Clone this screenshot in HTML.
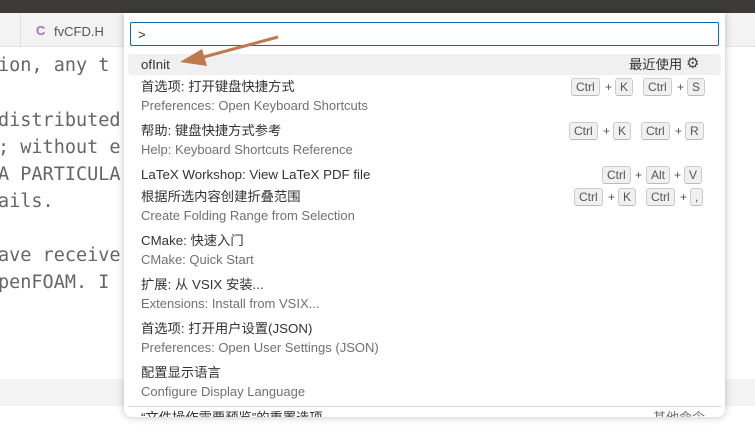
<!DOCTYPE html><html><head><meta charset="utf-8"><style>
*{margin:0;padding:0;box-sizing:border-box}
body{width:755px;height:432px;overflow:hidden;background:#fff;position:relative;font-family:"Liberation Sans","Noto Sans CJK SC",sans-serif;font-size:13px;color:#333}
.a{position:absolute;white-space:nowrap;line-height:17px}
.code{font-family:"DejaVu Sans Mono","Liberation Mono",monospace;font-size:18.5px;color:#666;left:-2px;line-height:22px}
.w{position:absolute;left:124px;top:13px;width:601px;height:404px;background:#fff;border-radius:0 0 8px 8px;box-shadow:0 0 8px rgba(0,0,0,.25);overflow:hidden}
.t{color:#333;font-size:13.3px}
.d{color:#717171;font-size:13px}
.k{position:absolute;top:0;height:18px;line-height:17px;font-size:12px;color:#555;background:#f0f0f0;border:1px solid #ccc;border-bottom-color:#bbb;border-radius:3px;padding:0 4px}
.p{position:absolute;font-size:12px;color:#555;top:1px;line-height:17px}
</style></head><body>
<div class="a" style="left:0;top:0;width:755px;height:13px;background:#3c3b37"></div>
<div class="a" style="left:0;top:13px;width:755px;height:34px;background:#f3f3f3;border-bottom:1px solid #e4e4e4"></div>
<div class="a" style="left:20px;top:13px;width:1px;height:34px;background:#e0e0e0"></div>
<div class="a" style="left:36px;top:22px;font-weight:bold;color:#a074c4;font-size:13px">C</div>
<div class="a" style="left:54px;top:23px;color:#555;font-size:13px">fvCFD.H</div>
<div class="a code" style="top:55px">ion, any t</div>
<div class="a code" style="top:110px">distributed</div>
<div class="a code" style="top:137px">; without e</div>
<div class="a code" style="top:164px">A PARTICULA</div>
<div class="a code" style="top:191px">ails.</div>
<div class="a code" style="top:245px">ave receive</div>
<div class="a code" style="top:272px">penFOAM.  I</div>
<div class="a" style="left:0;top:379px;width:755px;height:27px;background:#f3f3f3"></div>
<div class="w">
<div class="a" style="left:6px;top:9px;width:589px;height:24px;border:1px solid #0069be;border-radius:2px;padding:3px 7px;font-size:13px">&gt;</div>
<div class="a" style="left:4px;top:41px;width:593px;height:21px;background:#eef0f2;border-radius:3px"></div>
<div class="a t" style="left:17px;top:43px">ofInit</div>
<div class="a t" style="left:505px;top:43px">最近使用</div>
<div class="a" style="left:562px;top:42px;font-size:15px;color:#444">⚙</div>
<div class="a t" style="left:17px;top:65px">首选项: 打开键盘快捷方式</div>
<div class="a d" style="left:17px;top:84px">Preferences: Open Keyboard Shortcuts</div>
<div class="a t" style="left:17px;top:109px">帮助: 键盘快捷方式参考</div>
<div class="a d" style="left:17px;top:128px">Help: Keyboard Shortcuts Reference</div>
<div class="a t" style="left:17px;top:153px">LaTeX Workshop: View LaTeX PDF file</div>
<div class="a t" style="left:17px;top:175px">根据所选内容创建折叠范围</div>
<div class="a d" style="left:17px;top:194px">Create Folding Range from Selection</div>
<div class="a t" style="left:17px;top:219px">CMake: 快速入门</div>
<div class="a d" style="left:17px;top:238px">CMake: Quick Start</div>
<div class="a t" style="left:17px;top:263px">扩展: 从 VSIX 安装...</div>
<div class="a d" style="left:17px;top:282px">Extensions: Install from VSIX...</div>
<div class="a t" style="left:17px;top:307px">首选项: 打开用户设置(JSON)</div>
<div class="a d" style="left:17px;top:326px">Preferences: Open User Settings (JSON)</div>
<div class="a t" style="left:17px;top:351px">配置显示语言</div>
<div class="a d" style="left:17px;top:370px">Configure Display Language</div>
<div class="a" style="left:4px;top:393px;width:593px;height:1px;background:#d8d8d8"></div>
<div class="a t" style="left:17px;top:396px">“文件操作需要预览”的重置选项</div>
<div class="a d" style="left:529px;top:396px">其他命令</div>
<div class="a" style="left:447px;top:65px;width:130px;height:18px">
<div class="k" style="left:0">Ctrl</div><div class="p" style="left:34px">+</div><div class="k" style="left:44px">K</div>
<div class="k" style="left:72px">Ctrl</div><div class="p" style="left:106px">+</div><div class="k" style="left:116px">S</div></div>
<div class="a" style="left:445px;top:109px;width:130px;height:18px">
<div class="k" style="left:0">Ctrl</div><div class="p" style="left:34px">+</div><div class="k" style="left:44px">K</div>
<div class="k" style="left:72px">Ctrl</div><div class="p" style="left:106px">+</div><div class="k" style="left:116px">R</div></div>
<div class="a" style="left:478px;top:153px;width:100px;height:18px">
<div class="k" style="left:0">Ctrl</div><div class="p" style="left:33px">+</div><div class="k" style="left:44px">Alt</div><div class="p" style="left:72px">+</div><div class="k" style="left:82px">V</div></div>
<div class="a" style="left:450px;top:175px;width:130px;height:18px">
<div class="k" style="left:0">Ctrl</div><div class="p" style="left:34px">+</div><div class="k" style="left:44px">K</div>
<div class="k" style="left:72px">Ctrl</div><div class="p" style="left:106px">+</div><div class="k" style="left:116px">,</div></div>
</div>
<svg class="a" style="left:0;top:0" width="755" height="432"><path d="M278 37 L200 58" stroke="#c0794b" stroke-width="3"/><polygon points="180,62 202,49 207,66" fill="#c0794b"/></svg>
</body></html>
